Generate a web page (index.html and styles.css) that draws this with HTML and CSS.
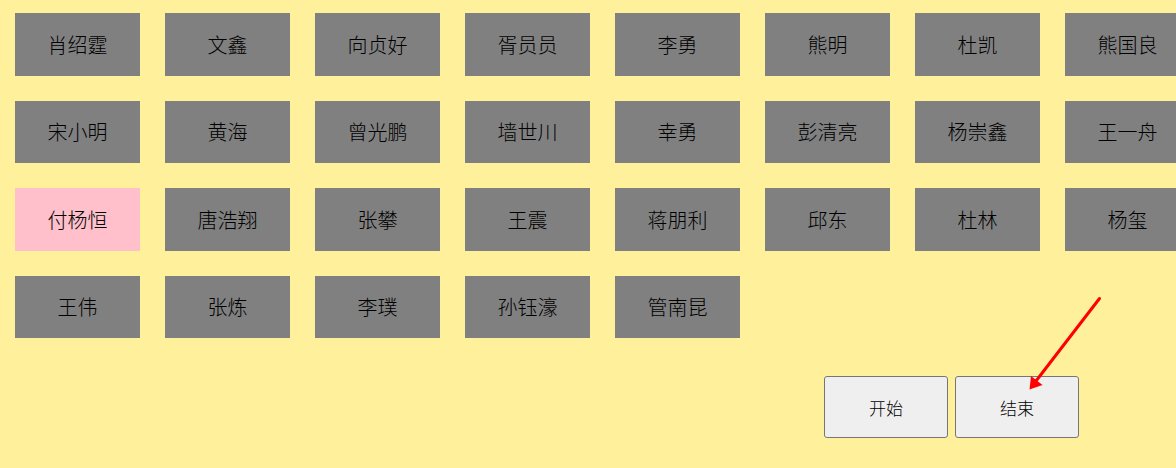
FILE: index.html
```html
<!DOCTYPE html>
<html lang="zh">
<head>
<meta charset="utf-8">
<title>点名</title>
<link rel="stylesheet" href="styles.css">
</head>
<body>
<div class="page">
  <div class="grid">
    <div class="tile">肖绍霆</div>
    <div class="tile">文鑫</div>
    <div class="tile">向贞好</div>
    <div class="tile">胥员员</div>
    <div class="tile">李勇</div>
    <div class="tile">熊明</div>
    <div class="tile">杜凯</div>
    <div class="tile">熊国良</div>
    <div class="tile">宋小明</div>
    <div class="tile">黄海</div>
    <div class="tile">曾光鹏</div>
    <div class="tile">墙世川</div>
    <div class="tile">幸勇</div>
    <div class="tile">彭清亮</div>
    <div class="tile">杨崇鑫</div>
    <div class="tile">王一舟</div>
    <div class="tile tile-active">付杨恒</div>
    <div class="tile">唐浩翔</div>
    <div class="tile">张攀</div>
    <div class="tile">王震</div>
    <div class="tile">蒋朋利</div>
    <div class="tile">邱东</div>
    <div class="tile">杜林</div>
    <div class="tile">杨玺</div>
    <div class="tile">王伟</div>
    <div class="tile">张炼</div>
    <div class="tile">李璞</div>
    <div class="tile">孙钰濠</div>
    <div class="tile">管南昆</div>
  </div>
  <div class="controls">
    <button class="btn">开始</button>
    <button class="btn">结束</button>
  </div>
</div>
<svg class="arrow" width="1176" height="468" viewBox="0 0 1176 468">
  <line x1="1099.5" y1="298.5" x2="1036" y2="381" stroke="#ff0000" stroke-width="3" stroke-linecap="round"/>
  <polygon points="1029.5,389.5 1031,376 1042.5,385" fill="#ff0000"/>
</svg>
</body>
</html>
```
FILE: styles.css
```css
html, body {
  margin: 0;
  padding: 0;
}
body {
  background: #fff09b;
  overflow: hidden;
  width: 1176px;
  height: 468px;
  font-family: "Noto Sans CJK SC", "Noto Sans", sans-serif;
  position: relative;
}
.page {
  padding: 13px 0 0 15px;
  width: 1200px;
}
.grid {
  display: grid;
  grid-template-columns: repeat(8, 125px);
  grid-auto-rows: 62.5px;
  column-gap: 25px;
  row-gap: 25px;
}
.tile {
  background: #808080;
  color: #000;
  font-size: 20px;
  font-weight: 300;
  display: flex;
  align-items: center;
  justify-content: center;
}
.tile-active {
  background: #ffc0cb;
}
.controls {
  display: flex;
  gap: 7px;
  padding-left: 809px;
  margin-top: 38px;
}
.btn {
  width: 124px;
  height: 62px;
  background: #efefef;
  border: 1px solid #767676;
  border-radius: 3px;
  font-family: "Noto Sans CJK SC", "Noto Sans", sans-serif;
  font-size: 17px;
  font-weight: 300;
  color: #000;
  padding: 0;
}
.arrow {
  position: absolute;
  left: 0;
  top: 0;
  pointer-events: none;
}
```
